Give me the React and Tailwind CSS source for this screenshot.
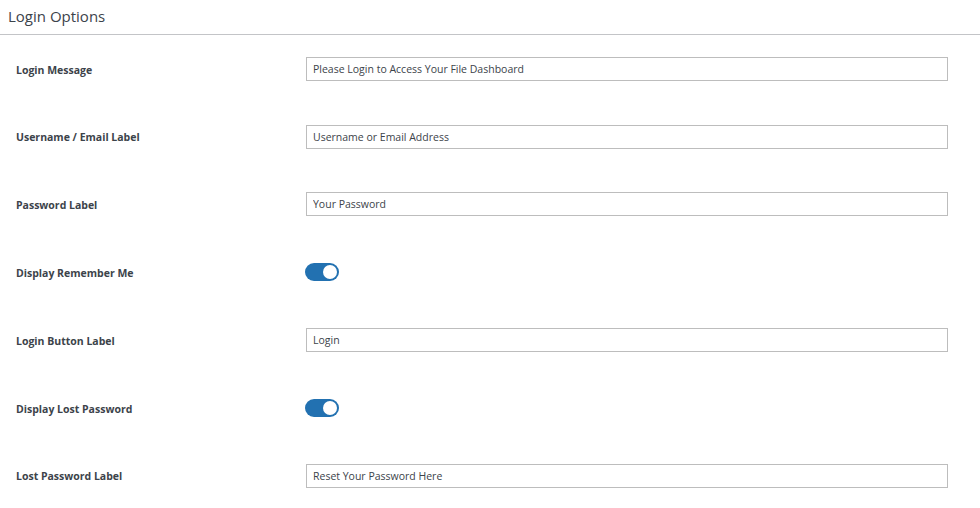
import React, { useState } from 'react';

const fields = [
  { label: 'Login Message', type: 'text', value: 'Please Login to Access Your File Dashboard' },
  { label: 'Username / Email Label', type: 'text', value: 'Username or Email Address' },
  { label: 'Password Label', type: 'text', value: 'Your Password' },
  { label: 'Display Remember Me', type: 'toggle', value: true },
  { label: 'Login Button Label', type: 'text', value: 'Login' },
  { label: 'Display Lost Password', type: 'toggle', value: true },
  { label: 'Lost Password Label', type: 'text', value: 'Reset Your Password Here' },
];

const Toggle = ({ on, onChange }) => (
  <button
    type="button"
    onClick={() => onChange(!on)}
    className={`relative w-[34px] h-[18px] -ml-[1px] rounded-full ${on ? 'bg-[#2271b1]' : 'bg-[#c3c4c7]'}`}
  >
    <span
      className={`absolute top-[2px] w-[14px] h-[14px] rounded-full bg-white ${on ? 'left-[18px]' : 'left-[2px]'}`}
    />
  </button>
);

const App = () => {
  const [values, setValues] = useState(fields.map(f => f.value));

  const update = (i, v) => setValues(prev => prev.map((p, j) => (j === i ? v : p)));

  return (
    <div className="w-[980px] h-[508px] bg-white overflow-hidden text-[#32373c]" style={{ fontFamily: '"Open Sans", "Noto Sans", sans-serif' }}>
      {/* header */}
      <div className="h-[35px] border-b border-[#c3c4c7] px-2 flex items-center">
        <h2 className="text-[15px] text-[#3c434a] leading-none pb-[1px]">Login Options</h2>
      </div>

      {/* option rows */}
      <div className="flex flex-col">
        {fields.map((f, i) => (
          <div key={f.label} className="h-[67.8px] flex items-center pl-4 pr-8">
            <label className="w-[290px] shrink-0 mt-[3px] text-[10.5px] font-bold text-[#3c434a]">{f.label}</label>
            {f.type === 'text' ? (
              <input
                type="text"
                value={values[i]}
                onChange={e => update(i, e.target.value)}
                className="flex-1 h-[24px] border border-[#bdbdbd] px-[6px] text-[10.5px] text-[#3c434a] outline-none"
              />
            ) : (
              <Toggle on={values[i]} onChange={v => update(i, v)} />
            )}
          </div>
        ))}
      </div>
    </div>
  );
};

export default App;
